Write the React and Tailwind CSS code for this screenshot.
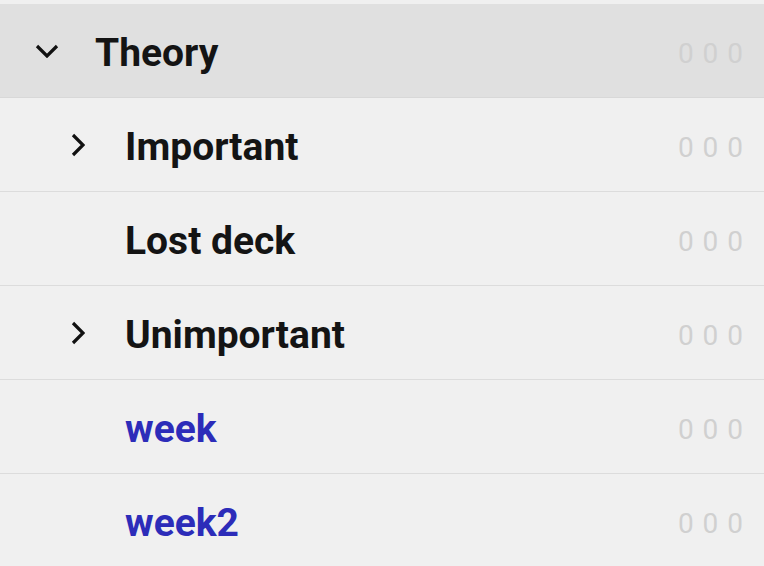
import React from 'react'

const ChevronDown = () => (
  <svg width="24" height="14" viewBox="0 0 24 14" fill="none">
    <path d="M2 2L12 12L22 2" stroke="#111" strokeWidth="3.2" strokeLinecap="butt" />
  </svg>
)

const ChevronRight = () => (
  <svg width="14" height="24" viewBox="0 0 14 24" fill="none">
    <path d="M2 2L12 12L2 22" stroke="#111" strokeWidth="3.2" strokeLinecap="butt" />
  </svg>
)

const Counts = () => (
  <div className="ml-auto mt-[6px] pr-[20px] text-[28px] text-[#d0d0d0] tracking-[1px]" style={{ fontFamily: 'Roboto, sans-serif' }}>
    0 0 0
  </div>
)

const rows = [
  { name: 'Important', chevron: true, blue: false },
  { name: 'Lost deck', chevron: false, blue: false },
  { name: 'Unimportant', chevron: true, blue: false },
  { name: 'week', chevron: false, blue: true },
  { name: 'week2', chevron: false, blue: true }
]

const App = () => {
  return (
    <div className="w-[764px] h-[566px] overflow-hidden bg-[#f0f0f0]" style={{ fontFamily: 'Roboto, sans-serif' }}>
      <div className="h-[4px] bg-[#f0f0f0]" />
      {/* deck header */}
      <div className="flex items-center h-[94px] bg-[#e0e0e0] border-b border-[#d8d8d8]">
        <div className="w-[95px] flex items-center pl-[35px] pt-[1px]">
          <ChevronDown />
        </div>
        <span className="mt-[6px] text-[39px] font-bold text-[#141414]">Theory</span>
        <Counts />
      </div>

      {/* subdecks */}
      {rows.map((row) => (
        <div key={row.name} className="flex items-center h-[94px] border-b border-[#dcdcdc]">
          <div className="w-[125px] flex items-center pl-[71px]">
            {row.chevron && <ChevronRight />}
          </div>
          <span className={`mt-[6px] text-[39px] font-bold ${row.blue ? 'text-[#2c2cb9]' : 'text-[#141414]'}`}>
            {row.name}
          </span>
          <Counts />
        </div>
      ))}
    </div>
  )
}

export default App
